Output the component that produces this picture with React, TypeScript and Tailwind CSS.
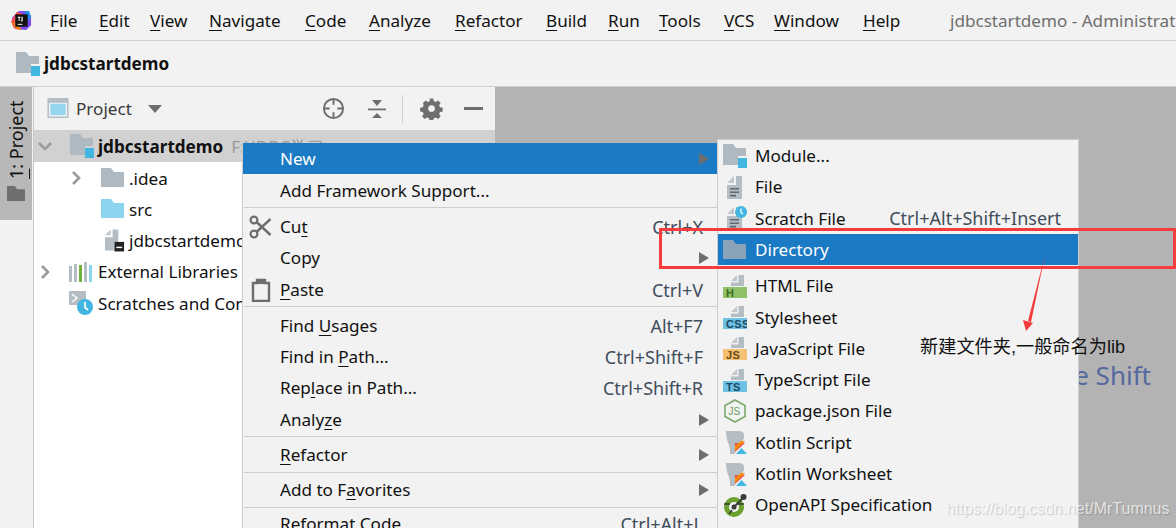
import React from "react";

const font = { fontFamily: '"Noto Sans","Open Sans",sans-serif' };

function Folder({ c = "#afb9c2", cls = "w-[23px] h-[19px]" }: { c?: string; cls?: string }) {
  return (
    <svg viewBox="0 0 23 19" className={cls}>
      <path d="M0 0h10l3 4h10v15H0z" fill={c} />
    </svg>
  );
}

function ModuleFolder({ cls = "w-[24px] h-[24px]" }: { cls?: string }) {
  return (
    <svg viewBox="0 0 24 24" className={cls}>
      <path d="M0 0h10l3 4h10v8h-8v9H0z" fill="#afb9c2" />
      <rect x="15" y="14" width="9" height="10" fill="#40b6e0" />
    </svg>
  );
}

function Doc({ badge }: { badge?: React.ReactNode }) {
  return (
    <svg viewBox="0 0 24 24" className="w-[24px] h-[24px]">
      <path d="M4 8l7-7v7z" fill="#c0c6cc" />
      <path d="M13 1h6v23H4V10h9z" fill="#b4bcc4" />
      <path d="M7 13h9v1.600H7zM7 16.400h9V18H7zM7 19.800h6v1.600H7z" fill="#5f6870" />
      {badge}
    </svg>
  );
}

function TagDoc({ bg, label, fg }: { bg: string; label: string; fg: string }) {
  return (
    <svg viewBox="0 0 24 24" className="w-[24px] h-[24px]">
      <path d="M8 7l6-6v6z" fill="#c0c6cc" />
      <path d="M15.500 1H21v11H8V8.500h7.500z" fill="#b4bcc4" />
      <rect x="0" y="13" width="24" height="11" fill={bg} />
      <text x="3" y="23" fontSize="11" fontWeight="700" fill={fg} fontFamily="Liberation Sans" letterSpacing="0.300">
        {label}
      </text>
    </svg>
  );
}

function Kotlin() {
  return (
    <svg viewBox="0 0 24 24" className="w-[24px] h-[24px]">
      <path d="M3 1h13c4 0 6 3 5 7-1 3-3 4-6 5l-3 3v8H7c0-4 0-6-1-9C4 11 3 6 3 1z" fill="#b4bcc4" />
      <path d="M12 13h10L12 22z" fill="#e44857" />
      <path d="M12 16l6-5h4L12 21z" fill="#f88909" />
      <path d="M13 24l5.500-6 5.500 6z" fill="#40b6e0" />
    </svg>
  );
}

function OpenApi() {
  return (
    <svg viewBox="0 0 24 24" className="w-[24px] h-[24px]">
      <circle cx="11" cy="14" r="10" fill="#6ba22f" />
      <circle cx="11" cy="14" r="5" fill="#f2f2f2" />
      <path d="M1 11h6M15 11h6M6 21l3-4" stroke="#3a3a3a" strokeWidth="1.500" />
      <circle cx="11" cy="14" r="2.500" fill="#3a3a3a" />
      <circle cx="20.500" cy="4" r="3" fill="#3a3a3a" />
      <path d="M12 13l8-8" stroke="#3a3a3a" strokeWidth="2" />
    </svg>
  );
}

function Tri() {
  return (
    <svg viewBox="0 0 10 12" className="w-[10px] h-[12px]">
      <path d="M0 0l10 6-10 6z" fill="#6e6e6e" />
    </svg>
  );
}

function Chevron({ down }: { down?: boolean }) {
  return (
    <svg viewBox="0 0 14 14" className="w-[14px] h-[14px]">
      <path d={down ? "M1 4l6 6 6-6" : "M4 1l6 6-6 6"} fill="none" stroke="#9a9a9a" strokeWidth="2.600" />
    </svg>
  );
}

function Sep() {
  return <div className="h-px bg-[#cdcdcd] ml-[1px]" />;
}

function Row({ h = "h-[31px]", label, sc, arrow, icon, active }: { h?: string; label: React.ReactNode; sc?: string; arrow?: boolean; icon?: React.ReactNode; active?: boolean }) {
  return (
    <div className={`${h} flex items-center pl-[37px] pr-[5px] relative ${active ? "bg-[#1a7ac3] text-white" : "text-[#111]"}`}>
      {icon && <div className="absolute left-[6px] top-0 bottom-0 flex items-center">{icon}</div>}
      <span className="flex-1 whitespace-nowrap">{label}</span>
      {sc && <span className="text-[#3f4d5c] text-[18px] pr-[9px] whitespace-nowrap">{sc}</span>}
      {arrow && (
        <span className="ml-auto flex items-center pr-[3px]">
          <Tri />
        </span>
      )}
    </div>
  );
}

function SubRow({ label, sc, icon, active }: { label: string; sc?: string; icon?: React.ReactNode; active?: boolean }) {
  return (
    <div className={`h-[31.300px] flex items-center pl-[37px] pr-[17px] relative ${active ? "bg-[#1a7ac3] text-white" : "text-[#111]"}`}>
      <div className="absolute left-[5px] top-0 bottom-0 flex items-center">{icon}</div>
      <span className="flex-1 whitespace-nowrap">{label}</span>
      {sc && <span className="text-[#3f4d5c] text-[18px] whitespace-nowrap">{sc}</span>}
    </div>
  );
}

const menus: [string, string][] = [
  ["File", "w-[49px]"],
  ["Edit", "w-[51px]"],
  ["View", "w-[59px]"],
  ["Navigate", "w-[96px]"],
  ["Code", "w-[64px]"],
  ["Analyze", "w-[86px]"],
  ["Refactor", "w-[91px]"],
  ["Build", "w-[62px]"],
  ["Run", "w-[51px]"],
  ["Tools", "w-[65px]"],
  ["VCS", "w-[50px]"],
  ["Window", "w-[89px]"],
  ["Help", "w-[87px]"],
];

export default function App() {
  return (
    <div className="relative w-[1176px] h-[528px] overflow-hidden bg-[#b3b3b3] text-[17.100px] leading-none flex flex-col" style={font}>
      {/* menu bar */}
      <div className="h-[41px] shrink-0 bg-[#f2f2f2] border-b border-[#cfcfcf] flex items-center pt-[2px]">
        <div className="w-[50px] shrink-0 pl-[11px] -mt-[2px] flex items-center">
          <svg viewBox="0 0 22 22" className="w-[21px] h-[21px]">
            <path d="M1 8L8 1h8l5 5v10l-5 5-12-1z" fill="#7b4cf2" />
            <path d="M0 12l6-10 6 2-4 14-5 1z" fill="#ff4d4d" />
            <path d="M1 14l4 6 6 1-5-9z" fill="#f97a12" />
            <path d="M14 1h5l2 7-3 3z" fill="#1f8fe8" />
            <rect x="4.500" y="4.500" width="13" height="13" fill="#111" />
            <path d="M7 7h3v1H9v3.500H8V8H7zM11 7h1.200v4.200c0 .8-1 1.100-2 .6l.4-.8c.3.200.4.100.4-.1z" fill="#fff" />
            <rect x="7" y="14.500" width="5" height="1" fill="#fff" />
          </svg>
        </div>
        {menus.map(([m, w]) => (
          <div key={m} className={`${w} text-[#111] shrink-0`}>
            <u className="underline-offset-[3px] decoration-1">{m[0]}</u>
            {m.slice(1)}
          </div>
        ))}
        <div className="text-[#6e6e6e] whitespace-nowrap">jdbcstartdemo - Administrat</div>
      </div>
      {/* nav bar */}
      <div className="h-[46px] shrink-0 bg-[#f2f2f2] border-b border-[#cfcfcf] flex items-center pl-[16px] gap-[4px]">
        <ModuleFolder />
        <span className="font-bold text-[#111]">jdbcstartdemo</span>
      </div>
      {/* body */}
      <div className="flex-1 flex min-h-0">
        <div className="w-[34px] shrink-0 bg-[#f2f2f2] border-r border-[#c9c9c9]">
          <div className="h-[133px] w-[32px] bg-[#b8b8b8] flex flex-col items-center pt-[13px] gap-[7px]">
            <span className="[writing-mode:vertical-rl] rotate-180 text-[#111] text-[18px] h-[79px] w-[20px] flex items-center justify-start">
              <span>
                <u className="underline-offset-[3px]">1</u>: Project
              </span>
            </span>
            <Folder c="#6e6e6e" cls="w-[18px] h-[15px]" />
          </div>
        </div>
        <div className="w-[461px] shrink-0 bg-white flex flex-col">
          <div className="h-[43px] shrink-0 bg-[#f2f2f2] flex items-center pl-[13px] relative">
            <svg viewBox="0 0 22 22" className="w-[22px] h-[21px]">
              <rect x="0" y="0" width="22" height="21" fill="#b4bcc4" />
              <rect x="1.500" y="5" width="19" height="14.500" fill="#f2f2f2" />
              <rect x="3" y="6" width="16" height="12" fill="#95d6ee" />
            </svg>
            <span className="ml-[7px] text-[#3a3a3a]">Project</span>
            <svg viewBox="0 0 14 8" className="w-[14px] h-[8px] ml-[16px]">
              <path d="M0 0h14L7 8z" fill="#6e6e6e" />
            </svg>
            <div className="ml-auto flex items-center pr-[12px]">
              <svg viewBox="0 0 24 24" className="w-[23px] h-[23px]">
                <circle cx="12" cy="12" r="10" fill="none" stroke="#6e6e6e" strokeWidth="2" />
                <path d="M12 2v6M12 16v6M2 12h6M16 12h6" stroke="#6e6e6e" strokeWidth="2" />
              </svg>
              <svg viewBox="0 0 20 20" className="w-[20px] h-[20px] ml-[22px]">
                <path d="M1 9.500h18v1.800H1z" fill="#6e6e6e" />
                <path d="M5 1h10l-5 6zM5 19h10l-5-5z" fill="#6e6e6e" />
              </svg>
              <div className="w-px h-[28px] bg-[#cfcfcf] ml-[15px]" />
              <svg viewBox="0 0 24 24" className="w-[23px] h-[23px] ml-[17px]">
                <path d="M10 1h4l.6 3 2.200.9 2.600-1.700 2.800 2.800-1.700 2.600.9 2.200 3 .6v4l-3 .6-.9 2.200 1.700 2.600-2.800 2.800-2.600-1.700-2.200.9-.6 3h-4l-.6-3-2.200-.9-2.600 1.700-2.800-2.800 1.700-2.600-.9-2.200-3-.6v-4l3-.6.9-2.200L2.800 6l2.800-2.800 2.600 1.700 2.200-.9z" transform="translate(0.500 0.500) scale(0.950)" fill="#6e6e6e" />
                <circle cx="12" cy="12" r="3.500" fill="#f2f2f2" />
              </svg>
              <div className="w-[19px] h-[3px] bg-[#6e6e6e] ml-[21px]" />
            </div>
          </div>
          <div className="h-[32px] shrink-0 bg-[#d1d1d1] flex items-center pl-[4px] whitespace-nowrap overflow-hidden">
            <Chevron down />
            <span className="ml-[18px]">
              <ModuleFolder cls="w-[24px] h-[24px]" />
            </span>
            <span className="ml-[4px] pt-[1px] font-bold text-[#111]">jdbcstartdemo</span>
            <span className="ml-[8px] pt-[1px] text-[#9a9a9a]">F:\JDBC学习</span>
          </div>
          <div className="h-[31.300px] flex items-center pl-[35px] text-[#111]">
            <Chevron />
            <span className="ml-[18px]">
              <Folder />
            </span>
            <span className="ml-[5px] pt-[1px]">.idea</span>
          </div>
          <div className="h-[31.300px] flex items-center pl-[67px] text-[#111]">
            <Folder c="#8dd5ef" />
            <span className="ml-[5px] pt-[1px]">src</span>
          </div>
          <div className="h-[31.300px] flex items-center pl-[70px] text-[#111] whitespace-nowrap">
            <svg viewBox="0 0 22 24" className="w-[21px] h-[24px]">
              <path d="M1 7l6-6v6z" fill="#c0c6cc" />
              <path d="M9 1h6v14h-4v8H1V9h8z" fill="#b4bcc4" />
              <rect x="11" y="14" width="10" height="10" fill="#222" />
              <rect x="13" y="19" width="6" height="1.500" fill="#fff" />
            </svg>
            <span className="ml-[4px] pt-[1px]">jdbcstartdemo.iml</span>
          </div>
          <div className="h-[31.300px] flex items-center pl-[4px] text-[#111] whitespace-nowrap">
            <Chevron />
            <svg viewBox="0 0 23 20" className="w-[23px] h-[20px] ml-[17px]">
              <rect x="0" y="4" width="3" height="16" fill="#b4bcc4" />
              <rect x="5" y="2" width="3" height="18" fill="#b4bcc4" />
              <rect x="10" y="3" width="3" height="17" fill="#6eb23c" />
              <rect x="15" y="0" width="3" height="20" fill="#b4bcc4" />
              <rect x="20" y="3" width="3" height="17" fill="#8dd5ef" />
            </svg>
            <span className="ml-[6px] pt-[1px]">External Libraries</span>
          </div>
          <div className="h-[31.300px] flex items-center pl-[35px] text-[#111] whitespace-nowrap">
            <svg viewBox="0 0 24 24" className="w-[24px] h-[24px]">
              <rect x="0" y="0" width="17" height="14" fill="#b4bcc4" />
              <path d="M3 3l5 4-5 4" fill="none" stroke="#fff" strokeWidth="1.500" />
              <circle cx="16" cy="16" r="8" fill="#40b6e0" />
              <path d="M16 11v5.500l3 2.500" fill="none" stroke="#fff" strokeWidth="1.700" />
            </svg>
            <span className="ml-[5px] pt-[1px]">Scratches and Consoles</span>
          </div>
        </div>
        <div className="flex-1" />
      </div>

      {/* hint text behind menus */}
      <div className="absolute right-[25px] top-[362px] text-[26px] text-[#56689f] whitespace-nowrap">Double Shift</div>

      {/* context menu */}
      <div className="absolute left-[242px] top-[143px] w-[475px] h-[400px] bg-[#f2f2f2] border-l border-[#cdcdcd]">
        <Row h="h-[31px]" label="New" arrow active />
        <Row h="h-[33px]" label="Add Framework Support..." />
        <Sep />
        <div className="pt-[3px]">
          <Row h="h-[31px]" label={<><span>Cu</span><u className="underline-offset-[3px]">t</u></>} sc="Ctrl+X" icon={<svg viewBox="0 0 24 24" className="w-[24px] h-[24px]"><circle cx="5" cy="5" r="3.400" fill="none" stroke="#6e6e6e" strokeWidth="2.200" /><circle cx="5" cy="19" r="3.400" fill="none" stroke="#6e6e6e" strokeWidth="2.200" /><path d="M7.500 7l14 13M7.500 17l14-13" stroke="#6e6e6e" strokeWidth="2.400" /></svg>} />
          <Row h="h-[32px]" label="Copy" arrow />
          <Row h="h-[31px]" label={<><u className="underline-offset-[3px]">P</u>aste</>} sc="Ctrl+V" icon={<svg viewBox="0 0 20 24" className="w-[20px] h-[24px] ml-[2px]"><path d="M6 2h8v3h4v18H2V5h4z" fill="none" stroke="#6e6e6e" strokeWidth="2.400" /><rect x="6" y="1" width="8" height="5" fill="#6e6e6e" /></svg>} />
        </div>
        <div className="pt-[1px]">
          <Sep />
        </div>
        <div className="pt-[3px]">
          <Row h="h-[31px]" label={<>Find <u className="underline-offset-[3px]">U</u>sages</>} sc="Alt+F7" />
          <Row h="h-[31px]" label={<>Find in <u className="underline-offset-[3px]">P</u>ath...</>} sc="Ctrl+Shift+F" />
          <Row h="h-[32px]" label={<>Rep<u className="underline-offset-[3px]">l</u>ace in Path...</>} sc="Ctrl+Shift+R" />
          <Row h="h-[32px]" label={<>Analy<u className="underline-offset-[3px]">z</u>e</>} arrow />
        </div>
        <Sep />
        <Row h="h-[35px]" label={<><u className="underline-offset-[3px]">R</u>efactor</>} arrow />
        <Sep />
        <Row h="h-[34px]" label={<>Add to F<u className="underline-offset-[3px]">a</u>vorites</>} arrow />
        <Sep />
        <Row h="h-[31px]" label="Reformat Code" sc="Ctrl+Alt+L" />
      </div>

      {/* sub menu */}
      <div className="absolute left-[717px] top-[139px] w-[362px] h-[400px] bg-[#f2f2f2] border-l border-r border-t border-[#cdcdcd]">
        <SubRow label="Module..." icon={<ModuleFolder />} />
        <SubRow label="File" icon={<Doc />} />
        <SubRow
          label="Scratch File"
          sc="Ctrl+Alt+Shift+Insert"
          icon={<Doc badge={<g><circle cx="18" cy="6" r="6" fill="#40b6e0" /><path d="M18 2.500V6.500l2 1.500" fill="none" stroke="#fff" strokeWidth="1.300" /></g>} />}
        />
        <SubRow label="Directory" active icon={<Folder c="#8ba3b8" />} />
        <div className="h-px bg-[#cdcdcd] mt-[2px] mb-[2px]" />
        <SubRow label="HTML File" icon={<TagDoc bg="#8fc169" label="H" fg="#3d6a1e" />} />
        <SubRow label="Stylesheet" icon={<TagDoc bg="#6dc2e4" label="CSS" fg="#1c4a63" />} />
        <SubRow label="JavaScript File" icon={<TagDoc bg="#f4c073" label="JS" fg="#6a4a12" />} />
        <SubRow label="TypeScript File" icon={<TagDoc bg="#6dc2e4" label="TS" fg="#1c4a63" />} />
        <SubRow
          label="package.json File"
          icon={
            <svg viewBox="0 0 24 24" className="w-[24px] h-[24px]">
              <path d="M12 1l10 5.500v11L12 23 2 17.500v-11z" fill="none" stroke="#7aa96b" strokeWidth="1.600" />
              <text x="5.500" y="16" fontSize="10" fill="#6a9e5a" fontFamily="Liberation Sans">JS</text>
            </svg>
          }
        />
        <SubRow label="Kotlin Script" icon={<Kotlin />} />
        <SubRow label="Kotlin Worksheet" icon={<Kotlin />} />
        <SubRow label="OpenAPI Specification" icon={<OpenApi />} />
      </div>

      {/* annotation */}
      <div className="absolute left-[659px] top-[228px] w-[517px] h-[41px] border-[3px] border-[#f53b3b]" />
      <svg className="absolute left-[1015px] top-[250px] w-[35px] h-[85px]" viewBox="0 0 35 85">
        <path d="M30 5L16 72l-3-1z" fill="#f53b3b" />
        <path d="M8 70l10 3-7 8z" fill="#f53b3b" />
      </svg>
      <div className="absolute left-[920px] top-[338px] text-[18.200px] text-[#111] whitespace-nowrap" style={{ fontFamily: '"Liberation Sans","Noto Sans CJK SC",sans-serif' }}>
        新建文件夹,一般命名为lib
      </div>
      <div className="absolute left-[946px] top-[501px] text-[16px] text-white/70 whitespace-nowrap" style={{ fontFamily: '"Liberation Sans",sans-serif', textShadow: "1px 1px 1px rgba(0,0,0,.18)" }}>
        https://blog.csdn.net/MrTumnus
      </div>
    </div>
  );
}
